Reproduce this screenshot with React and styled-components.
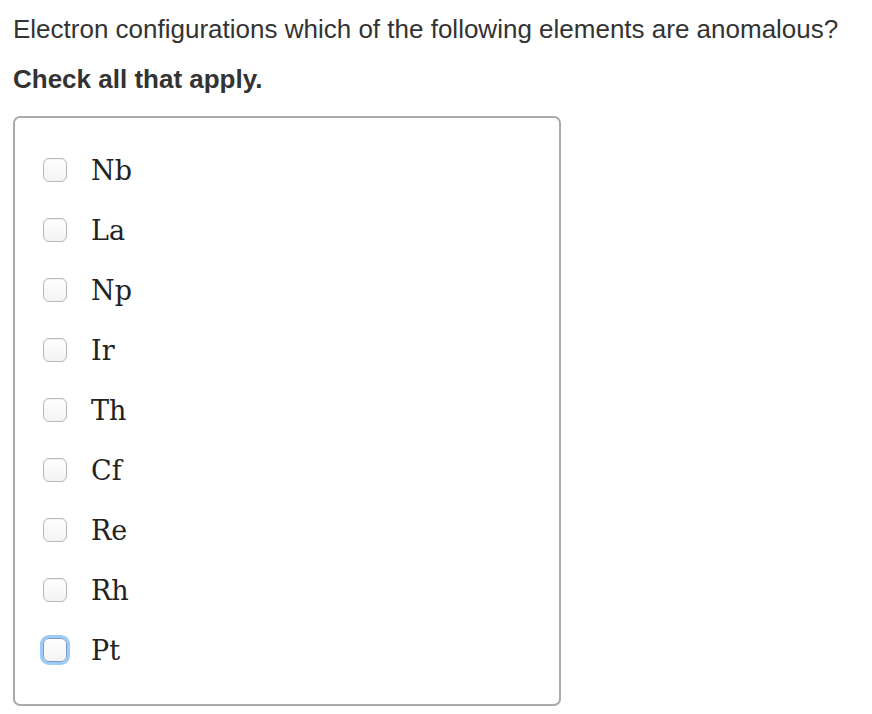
import styled, { createGlobalStyle } from "styled-components";

const GlobalStyle = createGlobalStyle`
  body {
    margin: 0;
    background: #fff;
    font-family: "Liberation Sans", Arial, sans-serif;
    color: #333;
  }
`;

const elements = ["Nb", "La", "Np", "Ir", "Th", "Cf", "Re", "Rh", "Pt"];

const Page = styled.div`
  padding: 14px 13px 0;
`;

const Question = styled.p`
  margin: 0;
  font-size: 26px;
  line-height: 30px;
  color: #333;
`;

const Instruction = styled.p`
  margin: 20px 0 0;
  font-size: 26px;
  line-height: 30px;
  font-weight: bold;
  color: #333;
`;

const OptionBox = styled.div`
  margin-top: 22px;
  width: 548px;
  box-sizing: border-box;
  border: 2px solid #aaa;
  border-radius: 7px;
  padding: 22px 0 24px 28px;
  display: flex;
  flex-direction: column;
`;

const Option = styled.label`
  display: flex;
  align-items: center;
  gap: 24px;
  height: 60px;
`;

const Box = styled.span`
  width: 24px;
  height: 24px;
  flex: none;
  box-sizing: border-box;
  border-radius: 6px;
  border: 1px solid ${(p) => (p.$focus ? "#7a9cc4" : "#b8b8b8")};
  background: linear-gradient(#fff, #f3f3f3);
  box-shadow: ${(p) =>
    p.$focus ? "0 0 0 3px #9ecaf6" : "inset 0 1px 1px rgba(0,0,0,0.05)"};
`;

const Label = styled.span`
  font-family: "DejaVu Serif", "Liberation Serif", serif;
  font-size: 27px;
  color: #222;
`;

export default function App() {
  return (
    <>
      <GlobalStyle />
      <Page>
        <Question>
          Electron configurations which of the following elements are anomalous?
        </Question>
        <Instruction>Check all that apply.</Instruction>
        <OptionBox>
          {elements.map((el, i) => (
            <Option key={el}>
              <Box $focus={i === elements.length - 1} />
              <Label>{el}</Label>
            </Option>
          ))}
        </OptionBox>
      </Page>
    </>
  );
}
